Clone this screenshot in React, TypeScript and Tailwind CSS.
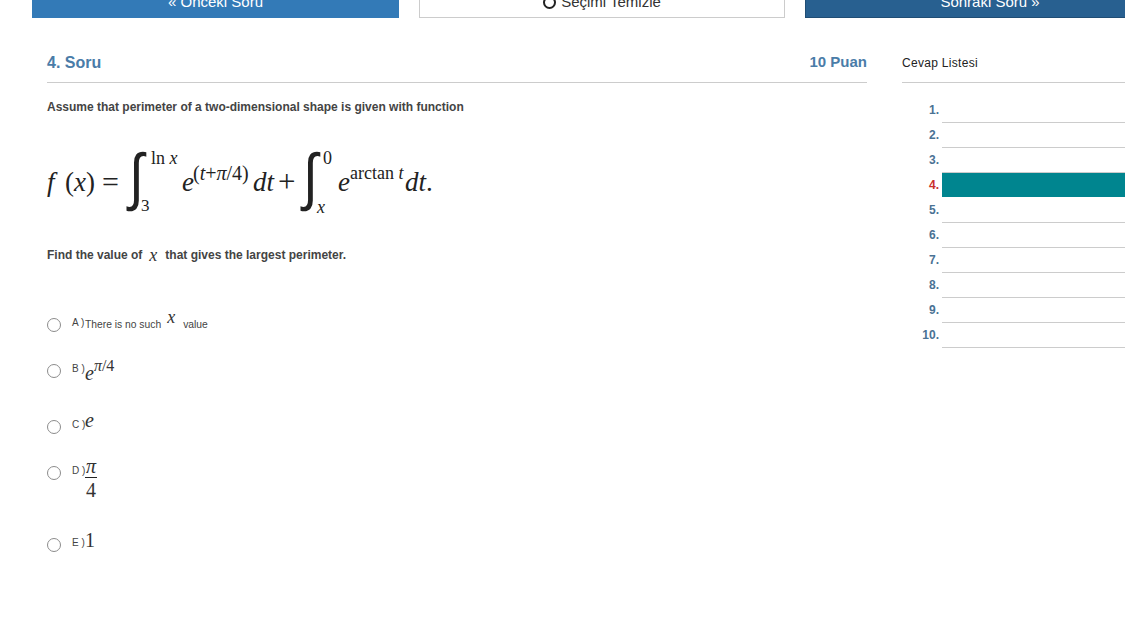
import React from 'react';

const serif = "font-['Liberation_Serif',serif]";

function Radio() {
  return <span className="block w-[14px] h-[14px] mt-[1px] shrink-0 rounded-full border-[1.5px] border-[#8c8c8c] bg-white" />;
}

function Integral({ top, bottom, topClass, bottomClass }: { top: React.ReactNode; bottom: React.ReactNode; topClass: string; bottomClass: string }) {
  return (
    <div className="relative w-[50px] h-[70px] shrink-0">
      <span className="font-['Noto_Sans',sans-serif] font-extralight absolute left-[1px] top-[-16px] text-[63px] leading-[86px] origin-left scale-x-[0.85] text-[#222]">∫</span>
      <span className={`absolute ${topClass}`}>{top}</span>
      <span className={`absolute ${bottomClass}`}>{bottom}</span>
    </div>
  );
}

function Formula() {
  return (
    <div className={`${serif} flex items-start h-[70px] mt-[33px] text-[27px] leading-[30px] text-[#222]`}>
      <div className="flex w-[81px] mt-[20px] whitespace-nowrap">
        <i className="w-[18px]">f</i>
        <span className="w-[37px]">(<i>x</i>)</span>
        <span className="text-[30px]">=</span>
      </div>
      <Integral
        top={<>ln <i>x</i></>}
        bottom="3"
        topClass="left-[23px] top-[1px] text-[18px] leading-[20px]"
        bottomClass="left-[13px] top-[49px] text-[17px] leading-[20px]"
      />
      <div className="mt-[20px] w-[4px]" />
      <i className="mt-[20px] w-[11px]">e</i>
      <div className="w-[60px] mt-[16px] text-[20px] leading-[20px] whitespace-nowrap">(<i>t</i>+<i>π</i>/4)</div>
      <div className="mt-[20px] w-[25px] whitespace-nowrap"><i>dt</i></div>
      <div className="mt-[20px] w-[24px] text-[31px]">+</div>
      <Integral
        top="0"
        bottom={<i>x</i>}
        topClass="left-[21px] top-[1px] text-[18px] leading-[20px]"
        bottomClass="left-[15px] top-[50px] text-[18px] leading-[20px]"
      />
      <i className="mt-[20px] w-[12px] -ml-[14px]">e</i>
      <div className="w-[55px] mt-[16px] text-[18px] leading-[20px] whitespace-nowrap">arctan <i>t</i></div>
      <div className="mt-[20px] whitespace-nowrap"><i>dt</i>.</div>
    </div>
  );
}

function Option({ letter, className, labelClass, children }: { letter: string; className: string; labelClass?: string; children: React.ReactNode }) {
  return (
    <div className={`flex items-start ${className}`}>
      <div className="w-[25px] shrink-0"><Radio /></div>
      <div className={`text-[10px] leading-[12px] text-[#444] w-[13px] shrink-0 whitespace-nowrap ${labelClass ?? ''}`}>{letter} )</div>
      {children}
    </div>
  );
}

export default function App() {
  const rows = [1, 2, 3, 4, 5, 6, 7, 8, 9, 10];
  return (
    <div className="w-[1125px] h-[633px] overflow-hidden bg-white font-['Liberation_Sans',Arial,sans-serif]">
      <div className="flex gap-[20px] ml-[32px] mt-[-16px] w-[1200px]">
        <button className="w-[367px] h-[34px] pt-[2px] shrink-0 bg-[#337ab7] text-white text-[15px]">« Önceki Soru</button>
        <button className="w-[366px] h-[34px] pt-[2px] shrink-0 bg-white border border-[#ccc] text-[#333] text-[15px] flex items-center justify-center gap-[5px]">
          <span className="block w-[13px] h-[13px] rounded-full border-2 border-[#222]" />
          Seçimi Temizle
        </button>
        <button className="w-[370px] h-[34px] pt-[2px] shrink-0 bg-[#286090] border border-[#204d74] text-white text-[15px]">Sonraki Soru »</button>
      </div>

      <div className="flex ml-[47px] mt-[34px]">
        <div className="w-[820px] shrink-0">
          <div className="flex items-center justify-between h-[20px] border-b border-[#ccc] pb-[10px] box-content">
            <span className="text-[16px] font-bold text-[#4a7ca8] pt-[1px]">4. Soru</span>
            <span className="text-[15px] font-bold text-[#4a7ca8] pt-[1px]">10 Puan</span>
          </div>
          <p className="mt-[17px] text-[12px] leading-[14px] font-bold text-[#444]">Assume that perimeter of a two-dimensional shape is given with function</p>
          <Formula />
          <p className="mt-[31px] text-[12px] leading-[14px] font-bold text-[#444] flex items-center whitespace-nowrap">
            Find the value of
            <i className={`${serif} font-normal text-[18px] ml-[7px] mr-[8px] text-[#333]`}>x</i>
            that gives the largest perimeter.
          </p>

          <Option letter="A" className="mt-[55px] h-[20px]">
            <div className="flex items-start text-[10.3px] leading-[12px] text-[#444] whitespace-nowrap mt-[2px]">
              There is no such
              <i className={`${serif} text-[18px] leading-[14px] ml-[6px] mr-[8px] mt-[-9px] text-[#333]`}>x</i>
              value
            </div>
          </Option>
          <Option letter="B" className="mt-[26px] h-[32px]">
            <div className={`${serif} flex items-start text-[#333] mt-[-5px]`}>
              <i className="text-[20px] leading-[20px] mt-[5px]">e</i>
              <span className="text-[16px] leading-[16px] whitespace-nowrap"><i>π</i>/4</span>
            </div>
          </Option>
          <Option letter="C" className="mt-[24px] h-[20px]">
            <i className={`${serif} text-[20px] leading-[18px] mt-[-8px] text-[#333]`}>e</i>
          </Option>
          <Option letter="D" className="mt-[26px] h-[52px]">
            <div className={`${serif} flex flex-col items-center text-[20px] text-[#333] mt-[-8px] w-[12px]`}>
              <i className="border-b border-[#222] w-full text-center pb-[2px] leading-[18px]">π</i>
              <span className="mt-[3px] leading-[18px]">4</span>
            </div>
          </Option>
          <Option letter="E" className="mt-[20px] h-[20px]">
            <span className={`${serif} text-[20px] leading-[18px] mt-[-6px] text-[#333]`}>1</span>
          </Option>
        </div>

        <div className="ml-[35px] w-[223px] shrink-0">
          <div className="h-[20px] box-content pb-[10px] border-b border-[#ccc] flex items-center text-[12px] tracking-[0.3px] text-[#222] pt-0"><span className="pt-[1px]">Cevap Listesi</span></div>
          <div className="mt-[15px]">
            {rows.map((n) => (
              <div key={n} className="flex h-[25px]">
                <div className={`w-[37px] shrink-0 text-right text-[12px] font-bold pt-[5px] leading-[14px] ${n === 4 ? 'text-[#c9302c]' : 'text-[#4a7294]'}`}>{n}.</div>
                <div className={`ml-[3px] flex-1 ${n === 4 ? 'bg-[#00858f] h-[24px]' : 'border-b border-[#ccc]'}`} />
              </div>
            ))}
          </div>
        </div>
      </div>
    </div>
  );
}
